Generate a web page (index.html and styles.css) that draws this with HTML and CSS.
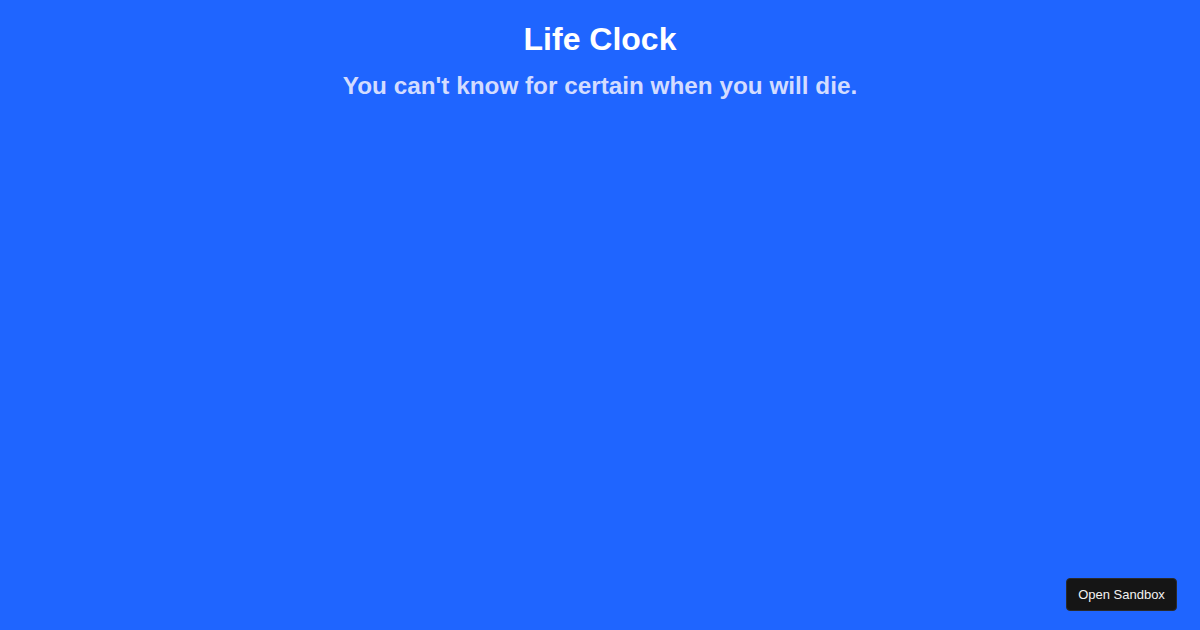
FILE: index.html
```html
<!DOCTYPE html>
<html lang="en">
<head>
    <meta charset="UTF-8">
    <meta name="viewport" content="width=device-width, initial-scale=1.0">
    <title>Life Clock</title>
    <link rel="stylesheet" href="styles.css">
</head>
<body>
    <div class="container">
        <header>
            <h1>Life Clock</h1>
            <h2>You can't know for certain when you will die.</h2>
        </header>
    </div>

    <a class="sandbox-link" href="#">Open Sandbox</a>
</body>
</html>
```

FILE: styles.css
```css
* {
    margin: 0;
    padding: 0;
    box-sizing: border-box;
}

body {
    font-family: 'Liberation Sans', Arial, sans-serif;
    background-color: #1f65ff;
    color: #ffffff;
    min-height: 100vh;
}

.container {
    width: 100%;
    padding-top: 21px;
}

header {
    text-align: center;
}

h1 {
    font-size: 32px;
    font-weight: bold;
    color: #ffffff;
}

h2 {
    font-size: 24.3px;
    font-weight: bold;
    color: #d3dcff;
    margin-top: 14px;
}

.sandbox-link {
    position: fixed;
    right: 23px;
    bottom: 19px;
    display: flex;
    align-items: center;
    justify-content: center;
    width: 111px;
    height: 33px;
    background-color: #151515;
    color: #f2f2f2;
    border: 1px solid #2a2a2a;
    border-radius: 4px;
    font-size: 13px;
    text-decoration: none;
}
```
